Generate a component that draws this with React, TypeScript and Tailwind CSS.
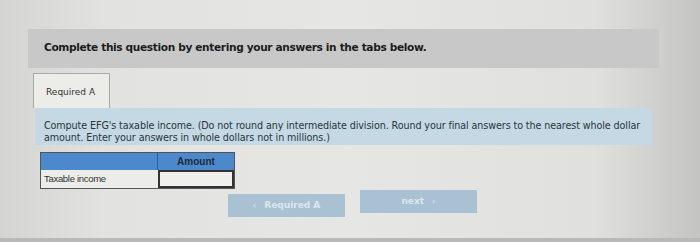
const font = { fontFamily: '"DejaVu Sans", Verdana, sans-serif' };

function NavButton({ children }: { children: React.ReactNode }) {
  return (
    <div className="flex h-[23px] w-[117px] items-center justify-center gap-2 bg-[#aac1d4] text-[9px] text-[#dce6ee]">
      {children}
    </div>
  );
}

export default function App() {
  return (
    <div
      className="relative h-[242px] w-[700px] overflow-hidden bg-[linear-gradient(90deg,#d4d4d2_0%,#e2e2e0_15%,#e6e6e4_50%,#e0e0de_85%,#c4c4c2_100%)]"
      style={font}
    >
      <div className="pt-[29px] pl-[28px]">
        <div className="flex h-[39px] w-[631px] items-center bg-[#c8c8c8] pb-[2px] pl-[16px] text-[10.6px] font-bold tracking-[-0.36px] text-[#1d1d1d]">
          Complete this question by entering your answers in the tabs below.
        </div>

        <div className="mt-[5px] ml-[5px] flex h-[35px] w-[77px] items-center border border-b-0 border-[#a9a9a9] bg-[#ecece9] pt-[4px] pl-[12px] text-[9px] text-[#333]">
          Required A
        </div>

        <div className="ml-[7px] w-[617px] bg-[#c4d9e3] px-[9px] pt-[12px] pb-[2px] text-[9.6px] leading-[11.5px] tracking-[-0.1px] text-[#2c3440]">
          Compute EFG's taxable income. (Do not round any intermediate division. Round your final answers to the nearest whole dollar
          <br />
          amount. Enter your answers in whole dollars not in millions.)
        </div>

        <div className="mt-[7px] ml-[12px] w-[195px] border border-[#555]" style={{ fontFamily: '"Liberation Sans", Arial, sans-serif' }}>
          <div className="flex h-[17px] bg-[#4c89cc]">
            <div className="w-[117px] border-r border-[#2d5f96]" />
            <div className="flex flex-1 items-center justify-center text-[10px] font-bold text-[#1d2a3a]">Amount</div>
          </div>
          <div className="flex h-[18px] bg-[#ecece9]">
            <div className="flex w-[117px] items-center pl-[3px] text-[9.5px] tracking-[-0.3px] text-[#333]">Taxable income</div>
            <div className="flex-1 border-2 border-[#333] bg-[#efefec]" />
          </div>
        </div>

        <div className="mt-[1px] ml-[200px] flex items-start gap-[15px]">
          <div className="mt-[4px]">
            <NavButton>
              <span>&lsaquo;</span>
              <span className="font-bold">Required A</span>
            </NavButton>
          </div>
          <NavButton>
            <span className="font-bold">next</span>
            <span>&rsaquo;</span>
          </NavButton>
        </div>
      </div>
      <div className="absolute bottom-0 left-0 h-[4px] w-full bg-[#b9b9b7]" />
    </div>
  );
}
